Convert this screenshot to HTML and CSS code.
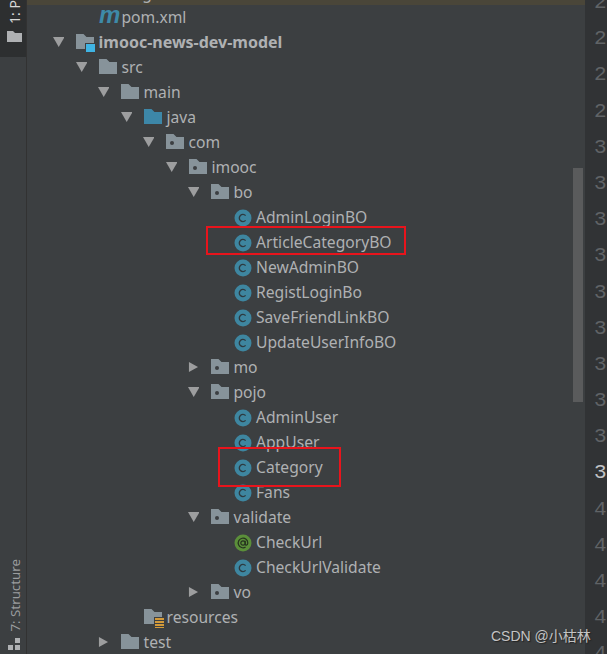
FILE: index.html
```html
<!DOCTYPE html>
<html lang="en">
<head>
<meta charset="utf-8">
<title>Project tree</title>
<link rel="stylesheet" href="styles.css">
</head>
<body>
<svg class="defs" width="0" height="0" aria-hidden="true">
  <symbol id="folder" viewBox="0 0 18 15"><path d="M0 0h7.5l3 3H18v12H0z"/></symbol>
  <symbol id="pkg" viewBox="0 0 18 15"><path d="M0 0h7.5l3 3H18v12H0z"/><circle cx="6" cy="9" r="2" fill="#3c3f41"/></symbol>
  <symbol id="cls" viewBox="0 0 18 18"><circle cx="9" cy="9" r="8.5" fill="#3e86a0"/><path d="M11.6 6.6A3.6 3.6 0 1 0 11.6 11.4" fill="none" stroke="#2e3a40" stroke-width="1.4"/></symbol>
  <symbol id="anno" viewBox="0 0 18 18"><circle cx="9" cy="9" r="8.5" fill="#5b8f3a"/><circle cx="9" cy="9" r="2.2" fill="none" stroke="#26331f" stroke-width="1.2"/><path d="M11.2 6.8v3.4c0 1.6 2.6 1.4 2.6-1.2A4.8 4.8 0 1 0 11.6 13" fill="none" stroke="#26331f" stroke-width="1.2"/></symbol>
  <symbol id="down" viewBox="0 0 10 9"><path d="M0 0h10.5L5.2 9z"/></symbol>
  <symbol id="right" viewBox="0 0 10 11"><path d="M0 0l10 5.5L0 11z"/></symbol>
</svg>

<div class="ide">
  <aside class="strip">
    <div class="tool-active">
      <span class="vtext vtext-project">1: Project</span>
      <svg class="strip-folder" viewBox="0 0 15 11"><path d="M0 0h6l2 2h7v9H0z"/></svg>
    </div>
    <div class="tool-bottom">
      <span class="vtext">7: Structure</span>
      <svg class="strip-struct" viewBox="0 0 13 13"><path d="M7 0h5v5H7zM0 7h5v5H0zM7 7h5v5H7z"/></svg>
    </div>
  </aside>

  <main class="tree">
    <div class="top-clip"><div class="row d1 clipped"><span class="arrow"></span><span class="ico"></span><span class="label">target</span></div></div>

    <div class="row d1"><span class="arrow"></span><span class="ico maven">m</span><span class="label">pom.xml</span></div>
    <div class="row d0"><svg class="arrow"><use href="#down"/></svg><span class="ico module"><svg class="folder-svg"><use href="#folder"/></svg><i class="badge"></i></span><span class="label bold">imooc-news-dev-model</span></div>
    <div class="row d1"><svg class="arrow"><use href="#down"/></svg><svg class="ico folder-svg"><use href="#folder"/></svg><span class="label">src</span></div>
    <div class="row d2"><svg class="arrow"><use href="#down"/></svg><svg class="ico folder-svg"><use href="#folder"/></svg><span class="label">main</span></div>
    <div class="row d3"><svg class="arrow"><use href="#down"/></svg><svg class="ico folder-svg java"><use href="#folder"/></svg><span class="label">java</span></div>
    <div class="row d4"><svg class="arrow"><use href="#down"/></svg><svg class="ico folder-svg"><use href="#pkg"/></svg><span class="label">com</span></div>
    <div class="row d5"><svg class="arrow"><use href="#down"/></svg><svg class="ico folder-svg"><use href="#pkg"/></svg><span class="label">imooc</span></div>
    <div class="row d6"><svg class="arrow"><use href="#down"/></svg><svg class="ico folder-svg"><use href="#pkg"/></svg><span class="label">bo</span></div>
    <div class="row d7"><span class="arrow"></span><svg class="ico round"><use href="#cls"/></svg><span class="label">AdminLoginBO</span></div>
    <div class="row d7"><span class="arrow"></span><svg class="ico round"><use href="#cls"/></svg><span class="label">ArticleCategoryBO</span></div>
    <div class="row d7"><span class="arrow"></span><svg class="ico round"><use href="#cls"/></svg><span class="label">NewAdminBO</span></div>
    <div class="row d7"><span class="arrow"></span><svg class="ico round"><use href="#cls"/></svg><span class="label">RegistLoginBo</span></div>
    <div class="row d7"><span class="arrow"></span><svg class="ico round"><use href="#cls"/></svg><span class="label">SaveFriendLinkBO</span></div>
    <div class="row d7"><span class="arrow"></span><svg class="ico round"><use href="#cls"/></svg><span class="label">UpdateUserInfoBO</span></div>
    <div class="row d6"><svg class="arrow"><use href="#right"/></svg><svg class="ico folder-svg"><use href="#pkg"/></svg><span class="label">mo</span></div>
    <div class="row d6"><svg class="arrow"><use href="#down"/></svg><svg class="ico folder-svg"><use href="#pkg"/></svg><span class="label">pojo</span></div>
    <div class="row d7"><span class="arrow"></span><svg class="ico round"><use href="#cls"/></svg><span class="label">AdminUser</span></div>
    <div class="row d7"><span class="arrow"></span><svg class="ico round"><use href="#cls"/></svg><span class="label">AppUser</span></div>
    <div class="row d7"><span class="arrow"></span><svg class="ico round"><use href="#cls"/></svg><span class="label">Category</span></div>
    <div class="row d7"><span class="arrow"></span><svg class="ico round"><use href="#cls"/></svg><span class="label">Fans</span></div>
    <div class="row d6"><svg class="arrow"><use href="#down"/></svg><svg class="ico folder-svg"><use href="#pkg"/></svg><span class="label">validate</span></div>
    <div class="row d7"><span class="arrow"></span><svg class="ico round"><use href="#anno"/></svg><span class="label">CheckUrl</span></div>
    <div class="row d7"><span class="arrow"></span><svg class="ico round"><use href="#cls"/></svg><span class="label">CheckUrlValidate</span></div>
    <div class="row d6"><svg class="arrow"><use href="#right"/></svg><svg class="ico folder-svg"><use href="#pkg"/></svg><span class="label">vo</span></div>
    <div class="row d3"><span class="arrow"></span><span class="ico module"><svg class="folder-svg"><use href="#folder"/></svg><i class="res-badge"></i></span><span class="label">resources</span></div>
    <div class="row d2"><svg class="arrow"><use href="#right"/></svg><svg class="ico folder-svg"><use href="#folder"/></svg><span class="label">test</span></div>

    <div class="scroll-thumb"></div>
    <div class="mark mark-a"></div>
    <div class="mark mark-b"></div>
  </main>

  <aside class="gutter">
    <span>2</span><span>2</span><span>2</span><span>2</span><span>3</span><span>3</span><span>3</span><span>3</span><span>3</span><span>3</span><span>3</span><span>3</span><span>3</span>
    <span class="current">3</span>
    <span>4</span><span>4</span><span>4</span><span>4</span><span>4</span>
  </aside>
</div>

<div class="watermark">CSDN @小枯林</div>
</body>
</html>
```
FILE: styles.css
```css
* { box-sizing: border-box; }
html, body { margin: 0; height: 100%; }
body {
  position: relative;
  width: 607px;
  height: 654px;
  overflow: hidden;
  background: #3c3f41;
  font-family: "Noto Sans", "Open Sans", sans-serif;
}
.defs { position: absolute; }
.ide { display: flex; height: 654px; overflow: hidden; }

/* left tool strip */
.strip {
  flex: 0 0 27px;
  display: flex;
  flex-direction: column;
  justify-content: space-between;
  border-right: 1px solid #323232;
  color: #bbbbbb;
  overflow: hidden;
}
.tool-active {
  height: 57px;
  padding-left: 3px;
  background: #2d2f30;
  display: flex;
  flex-direction: column;
  align-items: center;
  overflow: hidden;
}
.vtext {
  writing-mode: vertical-rl;
  transform: rotate(180deg);
  font-size: 13.3px;
  line-height: 14px;
  white-space: nowrap;
}
.vtext-project { height: 24px; flex: none; font-size: 14px; color: #d8d8d8; }
.strip-folder { width: 15px; height: 11px; margin-top: 7px; fill: #afb1b3; flex: none; }
.tool-bottom {
  display: flex;
  flex-direction: column;
  align-items: center;
  gap: 6px;
  padding-left: 3px;
  padding-bottom: 3px;
  color: #9a9c9e;
}
.strip-struct { width: 13px; height: 13px; fill: #afb1b3; }

/* project tree */
.tree {
  position: relative;
  flex: 0 0 558px;
  overflow: hidden;
  color: #afb1b3;
  font-size: 15.65px;
}
.top-clip {
  height: 5px;
  background: #4a4639;
  overflow: hidden;
  display: flex;
  flex-direction: column;
  justify-content: flex-end;
}
.row {
  display: flex;
  align-items: center;
  height: 25px;
  flex: none;
  white-space: nowrap;
}
.clipped { margin-bottom: -1px; }
.d0 { padding-left: 26px; }
.d1 { padding-left: 49px; }
.d2 { padding-left: 71px; }
.d3 { padding-left: 94px; }
.d4 { padding-left: 116px; }
.d5 { padding-left: 139px; }
.d6 { padding-left: 161px; }
.d7 { padding-left: 184px; }
.arrow {
  flex: 0 0 11px;
  width: 11px;
  height: 10px;
  margin-top: -2px;
  margin-right: 12px;
  fill: #9d9e9f;
}
.ico { flex: 0 0 18px; width: 18px; height: 18px; margin-right: 4.5px; position: relative; display: block; }
.folder-svg { width: 18px; height: 15px; fill: #87939a; display: block; }
svg.ico.folder-svg { height: 15px; margin-top: -2px; }
.java { fill: #3d87a8; }
.ico.round { width: 18px; height: 18px; margin-right: 4px; }
.module { height: 15px; margin-top: -2px; }
.badge {
  position: absolute;
  right: -1px;
  bottom: -3px;
  width: 9px;
  height: 8px;
  background: #3fb4e4;
  box-shadow: 0 0 0 1px #3c3f41;
}
.res-badge {
  position: absolute;
  right: -2px;
  bottom: -4px;
  width: 9px;
  height: 10px;
  background: repeating-linear-gradient(#d39a3a 0 2px, #3c3f41 2px 3px);
  box-shadow: 0 0 0 1px #3c3f41;
}
.maven {
  color: #3e8aa8;
  font-family: "Liberation Sans", sans-serif;
  font-weight: 700;
  font-style: italic;
  font-size: 24px;
  line-height: 18px;
  margin-top: -5px;
}
.label { line-height: 25px; margin-top: -1px; }
.bold { font-weight: 700; font-size: 16px; }

.scroll-thumb {
  position: absolute;
  left: 546px;
  top: 168px;
  width: 10px;
  height: 234px;
  background: #5a5b5c;
}
.mark {
  position: absolute;
  border: 2px solid #e8141c;
}
.mark-a { left: 179px; top: 226px; width: 200px; height: 29px; }
.mark-b { left: 191px; top: 447px; width: 123px; height: 40px; }

/* line-number gutter */
.gutter {
  flex: 1;
  background: #313335;
  display: flex;
  flex-direction: column;
  padding-left: 9px;
  overflow: hidden;
  color: #606366;
  font-family: "Liberation Mono", monospace;
  font-size: 21px;
  line-height: 36.2px;
}
.gutter span { height: 36.2px; flex: none; }
.gutter span:first-child { margin-top: -15px; }
.gutter .current { color: #c0c2c4; }

.watermark {
  position: absolute;
  left: 491px;
  top: 627px;
  color: #c4c4c4;
  font-family: "Liberation Sans", "Noto Sans CJK SC", sans-serif;
  font-size: 14px;
  line-height: 18px;
  text-shadow: 1px 1px 1px #222;
  white-space: nowrap;
}
```
